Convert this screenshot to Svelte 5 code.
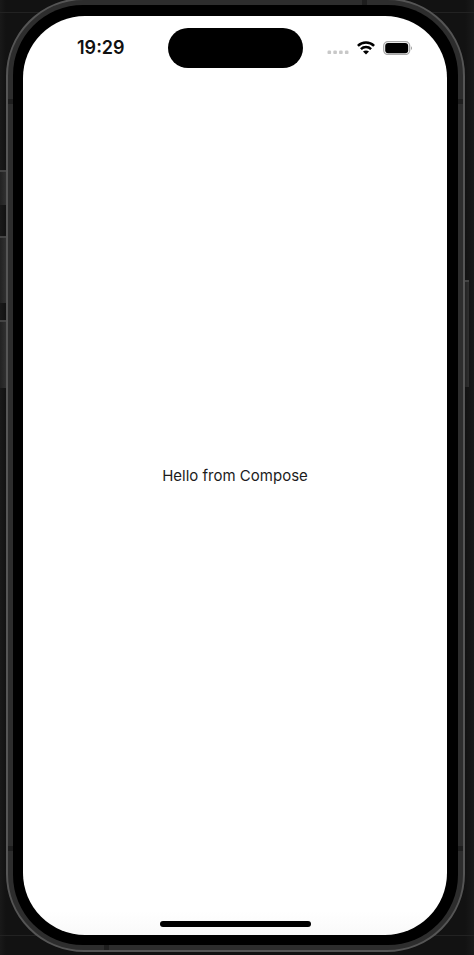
<script>
  export let time = '19:29';
  export let message = 'Hello from Compose';

  const buttons = ['action', 'volume-up', 'volume-down', 'power'];
  const bands = ['left high', 'right high', 'left low', 'right low', 'top', 'bottom'];
</script>

<div class="desktop">
  <div class="phone">
    {#each buttons as button}
      <span class="side-button {button}"></span>
    {/each}
    <div class="frame">
      {#each bands as band}
        <span class="band {band}"></span>
      {/each}
      <div class="bezel">
        <div class="screen">
          <header class="status-bar">
            <time>{time}</time>
            <div class="island"></div>
            <div class="indicators">
              <svg class="signal" width="22" height="14" viewBox="0 0 22 14" aria-label="No signal">
                <g fill="#c8c8c8">
                  <rect x="0.5" y="9.5" width="3.6" height="3.6" rx="1.2" />
                  <rect x="6.3" y="9.5" width="3.6" height="3.6" rx="1.2" />
                  <rect x="12.1" y="9.5" width="3.6" height="3.6" rx="1.2" />
                  <rect x="17.9" y="9.5" width="3.6" height="3.6" rx="1.2" />
                </g>
              </svg>
              <svg class="wifi" width="18" height="14" viewBox="0 0 18 14" aria-label="Wi-Fi">
                <g fill="none" stroke="#000" stroke-width="2.5">
                  <path d="M0.9 4.9C5.4 0.4 12.6 0.4 17.1 4.9" />
                  <path d="M3.9 8.1C6.8 5.3 11.2 5.3 14.1 8.1" />
                </g>
                <path d="M9 13.6L6 10.6C7.6 9 10.4 9 12 10.6Z" />
              </svg>
              <svg class="battery" width="30" height="14" viewBox="0 0 30 14" aria-label="Battery full">
                <rect x="0.7" y="0.7" width="26" height="12.8" rx="4.2" fill="none" stroke="#a9a9a9" stroke-width="1.3" />
                <rect x="2.2" y="2" width="23" height="10.2" rx="3" />
                <path d="M28 5.2C29.4 5.8 29.4 8.4 28 9Z" fill="#a6a6a6" />
              </svg>
            </div>
          </header>
          <main>{message}</main>
          <div class="home-indicator"></div>
        </div>
      </div>
    </div>
  </div>
</div>

<style>
  :global(body) {
    background: #151515;
  }

  .desktop {
    display: flex;
    box-sizing: border-box;
    height: 100vh;
    padding: 0 9px 3px 6px;
    overflow: hidden;
    background:
      linear-gradient(#222, #222) 0 12px / 100% 1px no-repeat,
      linear-gradient(#222, #222) 0 calc(100% - 19px) / 100% 1px no-repeat,
      linear-gradient(90deg, #191919, #121212 6px, #121212 calc(100% - 9px), #1a1a1a);
    font-family: Inter, 'Liberation Sans', sans-serif;
  }

  .phone {
    position: relative;
    display: flex;
    flex: 1;
    margin-top: -2px;
  }

  .frame {
    position: relative;
    display: flex;
    flex: 1;
    padding: 5px;
    overflow: hidden;
    border: 2px solid #555;
    border-radius: 78px;
    background: #2d2d2d;
  }

  .bezel {
    position: relative;
    display: flex;
    flex: 1;
    padding: 11px 11px 10px 10px;
    border-radius: 70px;
    background: #000;
  }

  .screen {
    display: flex;
    flex: 1;
    flex-direction: column;
    align-items: center;
    border-radius: 62px;
    background: linear-gradient(#fff calc(100% - 24px), #f9f9f9);
  }

  .status-bar {
    display: grid;
    grid-template-columns: 1fr auto 1fr;
    align-items: center;
    box-sizing: border-box;
    width: 100%;
    padding: 12px 34px 0 54px;
    column-gap: 24px;
  }

  time {
    color: #111;
    font-size: 18px;
    font-weight: 600;
    line-height: 24px;
  }

  .island {
    width: 135px;
    height: 40px;
    border-radius: 20px;
    background: #000;
  }

  .indicators {
    display: flex;
    justify-content: flex-end;
    gap: 8px;
  }

  main {
    display: flex;
    flex: 1;
    align-items: center;
    /* evens out the taller status bar so the text centers on the whole screen */
    padding-bottom: 38px;
    color: #1c1c1c;
    font-size: 15px;
    line-height: 20px;
  }

  .home-indicator {
    width: 151px;
    height: 6px;
    margin-bottom: 8px;
    border-radius: 3px;
    background: #000;
  }

  .side-button {
    position: absolute;
    left: -6px;
    width: 6px;
    box-sizing: border-box;
    border-top: 2px solid #444;
    background: linear-gradient(90deg, #222, #303030);
  }

  .action {
    top: 172px;
    height: 35px;
  }

  .volume-up {
    top: 238px;
    height: 67px;
  }

  .volume-down {
    top: 322px;
    height: 68px;
  }

  .power {
    top: 282px;
    right: -4px;
    left: auto;
    width: 4px;
    height: 107px;
  }

  .band {
    position: absolute;
    width: 5px;
    height: 5px;
    background: #1e1e1e;
  }

  .left {
    left: 0;
  }

  .right {
    right: 0;
  }

  .high {
    top: 99px;
  }

  .low {
    bottom: 99px;
  }

  .top {
    top: 0;
    right: 96px;
  }

  .bottom {
    bottom: 0;
    left: 96px;
  }
</style>
